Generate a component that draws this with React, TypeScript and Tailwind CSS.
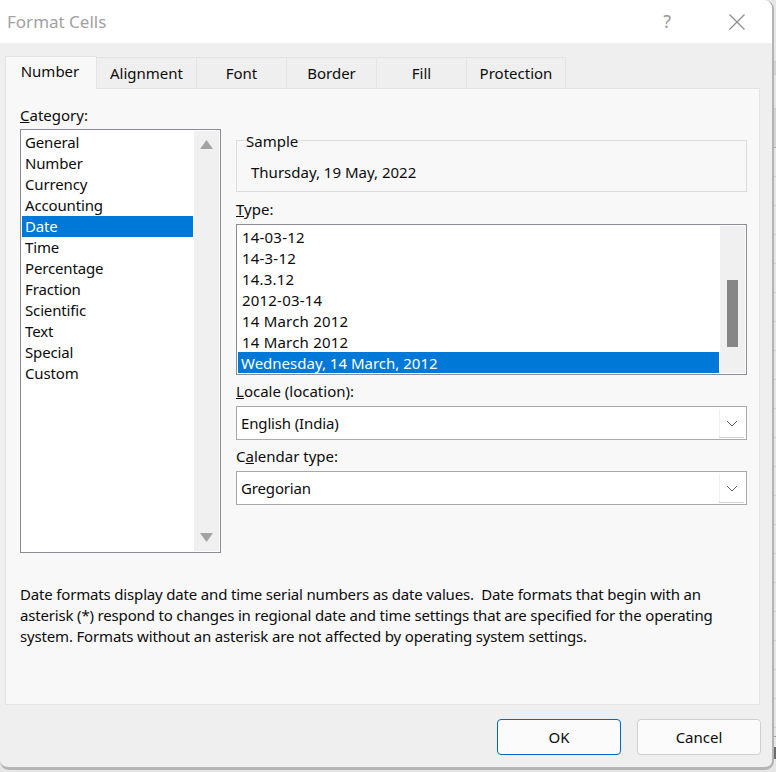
const categories = ["General", "Number", "Currency", "Accounting", "Date", "Time", "Percentage", "Fraction", "Scientific", "Text", "Special", "Custom"];
const types = ["14-03-12", "14-3-12", "14.3.12", "2012-03-14", "14 March 2012", "14 March 2012", "Wednesday, 14 March, 2012"];
const tabs = ["Alignment", "Font", "Border", "Fill", "Protection"];
const tabWidths = ["w-[100px]", "w-[90px]", "w-[90px]", "w-[90px]", "w-[99px]"];
const sheetRows = Array.from({ length: 20 });

const Chevron = () => (
  <span className="flex h-[28px] w-[25px] items-center justify-center border-l border-[#f0f0f0] bg-white shadow-[0_1px_0_#d0d0d0]">
    <svg width="12" height="7" viewBox="0 0 12 7" fill="none" stroke="#5f5f5f" strokeWidth="1">
      <path d="M1 1l5 5 5-5" />
    </svg>
  </span>
);

const Combo = ({ value }: { value: string }) => (
  <div className="flex h-[34px] items-center justify-between border border-[#a9a9ad] bg-white pl-1 pr-[2px]">
    <span className="tracking-[-0.15px]">{value}</span>
    <Chevron />
  </div>
);

export default function App() {
  return (
    <div className="flex h-[772px] w-[776px] overflow-hidden bg-[#e6e6e6] text-[15px] leading-[21px] text-[#0c0c0c] [font-family:'Noto_Sans',sans-serif]">
      <div className="flex h-[770px] w-[774px] shrink-0 flex-col overflow-hidden rounded-b-[9px] rounded-tr-[9px] border-b-[3px] border-r-2 border-[#b4b4b4] bg-[#efefef]">
        {/* Title bar */}
        <div className="flex h-[43px] shrink-0 items-center justify-between bg-white pl-[7px] pr-[27px]">
          <span className="text-[17px] text-[#a2a2a2]">Format Cells</span>
          <div className="flex items-center gap-[58px]">
            <span className="text-[18px] text-[#9a9a9a]">?</span>
            <svg width="16" height="16" viewBox="0 0 16 16" fill="none" stroke="#8c8c8c" strokeWidth="1.2">
              <path d="M.5.5l15 15M15.5.5l-15 15" />
            </svg>
          </div>
        </div>

        {/* Tabs */}
        <div className="flex h-[45px] shrink-0 items-end pl-[5px]">
          <div className="z-10 mb-[-1px] flex h-[33px] w-[92px] items-center justify-center border border-b-0 border-[#e3e3e3] bg-[#f8f8f8] pb-[3px] pr-[2px]">Number</div>
          {tabs.map((tab, i) => (
            <div key={tab} className={`flex h-[31px] items-center justify-center border-r border-t border-[#e3e3e3] ${tabWidths[i]}`}>
              {tab}
            </div>
          ))}
        </div>

        {/* Panel */}
        <div className="mx-[5px] h-[617px] w-[755px] shrink-0 border border-[#e3e3e3] bg-[#f8f8f8] pl-[14px] pr-[12px]">
          <div className="flex h-[465px] gap-[15px]">
            <div className="w-[201px] shrink-0">
              <div className="pt-[16px] pb-[3px] leading-[21px]">
                <u>C</u>ategory:
              </div>
              <div className="flex h-[424px] border border-[#8a8d94] bg-white p-px">
                <div className="flex-1 pt-[1px] tracking-[-0.15px]">
                  {categories.map((c) => (
                    <div key={c} className={`mr-px h-[21px] pl-[3px] ${c === "Date" ? "bg-[#0078d7] text-white" : ""}`}>
                      {c}
                    </div>
                  ))}
                </div>
                <div className="flex w-[25px] flex-col items-center justify-between bg-[#f0f0f0] py-[9px]">
                  <svg width="13" height="9" viewBox="0 0 13 9" fill="#a3a3a3"><path d="M6.5 0L13 9H0z" /></svg>
                  <svg width="13" height="9" viewBox="0 0 13 9" fill="#a3a3a3"><path d="M6.5 9L13 0H0z" /></svg>
                </div>
              </div>
            </div>

            <div className="flex-1">
              <fieldset className="mt-[39px] h-[64px] border border-[#dcdcdc]">
                <legend className="ml-[9px] h-[24px] px-0 pt-[3px] leading-[21px]">Sample</legend>
                <div className="pl-[14px] pt-[10px]">Thursday, 19 May, 2022</div>
              </fieldset>
              <div className="pt-[7px] pb-[4px]">
                <u>T</u>ype:
              </div>
              <div className="flex h-[151px] border border-[#8a8d94] bg-white p-px">
                <div className="flex-1 pt-[1px]">
                  {types.map((t, i) =>
                    i === 6 ? (
                      <div key={i} className="mr-px -mt-px h-[21px] bg-[#0078d7] pl-[3px] pt-px text-white">
                        {t}
                      </div>
                    ) : (
                      <div key={i} className="mr-px h-[21px] pl-[4px] tracking-[0.2px]">
                        {t}
                      </div>
                    ),
                  )}
                </div>
                <div className="w-[25px] bg-[#f0f0f0] pl-[7px] pt-[54px]">
                  <div className="h-[67px] w-[11px] bg-[#868686]" />
                </div>
              </div>
              <div className="pt-[6px] pb-[4px]">
                <u>L</u>ocale (location):
              </div>
              <Combo value="English (India)" />
              <div className="pt-[6px] pb-[4px]">
                C<u>a</u>lendar type:
              </div>
              <Combo value="Gregorian" />
            </div>
          </div>

          <p className="whitespace-pre pt-[30px] tracking-[-0.17px]">
            {"Date formats display date and time serial numbers as date values.  Date formats that begin with an"}
            <br />
            asterisk (*) respond to changes in regional date and time settings that are specified for the operating
            <br />
            system. Formats without an asterisk are not affected by operating system settings.
          </p>
        </div>

        {/* Buttons */}
        <div className="flex justify-end gap-4 pr-[11px] pt-[14px]">
          <button className="h-[36px] w-[124px] rounded-[4px] border border-[#0067c0] bg-[#fbfbfb]">OK</button>
          <button className="h-[36px] w-[124px] rounded-[4px] border border-[#d0d0d0] bg-[#fbfbfb]">Cancel</button>
        </div>
      </div>

      {/* Worksheet showing behind the dialog */}
      <div className="w-[2px] shrink-0">
        <div className="h-[62px] border-b border-[#cfcfcf]" />
        <div className="h-[13px] border-b border-[#cfcfcf] bg-[#d6d6d6]" />
        <div className="h-[34px] border-b border-[#cfcfcf]" />
        <div className="h-[39px] border-b border-[#a8a8a8] bg-[#d6d6d6]" />
        {sheetRows.map((_, i) => (
          <div key={i} className="h-[29px] border-b border-[#d0d0d0]" />
        ))}
        <div className="h-[9px] border-b border-[#a0a0a0]" />
        <div className="h-[10px]" />
        <div className="h-[12px] bg-[#6e6e6e]" />
      </div>
    </div>
  );
}
